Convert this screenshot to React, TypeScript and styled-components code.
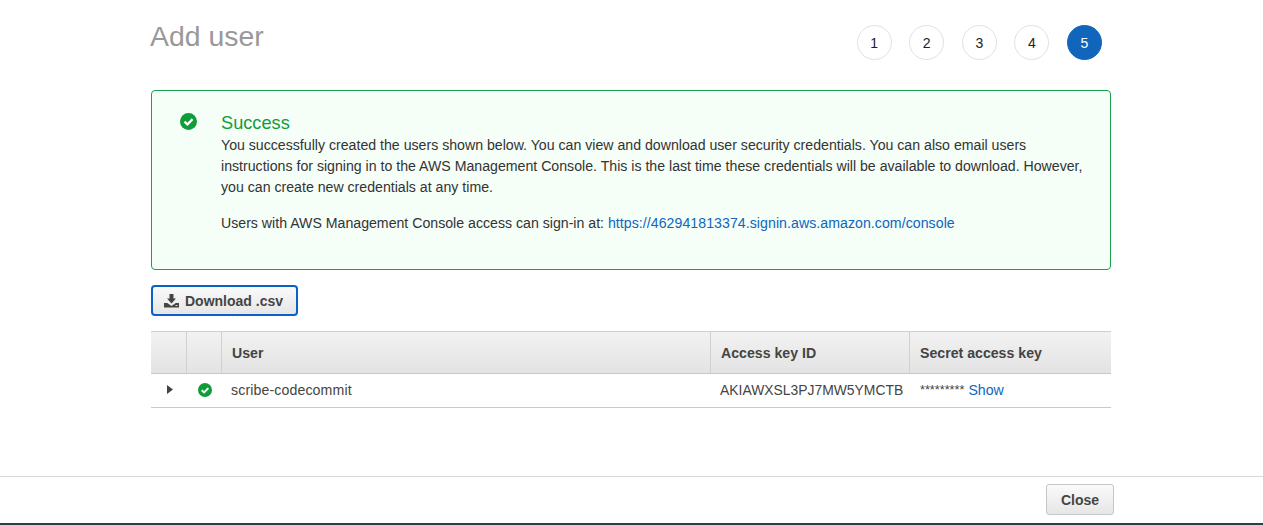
import React from 'react';
import styled, { createGlobalStyle } from 'styled-components';

const Global = createGlobalStyle`
  html, body { margin: 0; padding: 0; background: #fff; }
  body { font-family: "Liberation Sans", Arial, sans-serif; color: #333; font-size: 14.15px; }
`;
const Page = styled.div`
  width: 1263px; height: 525px; display: flex; flex-direction: column; overflow: hidden; box-sizing: border-box;
  border-bottom: 2px solid #2f3d4a;
`;
const Main = styled.main`
  flex: 1; padding: 0 152px 0 151px; display: flex; flex-direction: column;
`;
const Header = styled.header`
  height: 90px; display: flex; justify-content: space-between; align-items: flex-start;
`;
const Title = styled.h1`
  margin: 19px 0 0 -1px; font-size: 28.4px; line-height: 34px; font-weight: 400; color: #999;
`;
const Steps = styled.ol`
  list-style: none; margin: 25px 9px 0 0; padding: 0; display: flex; gap: 17.6px;
`;
const Step = styled.li<{ $active?: boolean }>`
  width: 35px; height: 35px; box-sizing: border-box; border-radius: 50%;
  display: flex; align-items: center; justify-content: center; font-size: 14px;
  background: ${p => (p.$active ? '#1166bb' : '#fff')};
  color: ${p => (p.$active ? '#fff' : '#222')};
  border: 1px solid ${p => (p.$active ? '#1166bb' : '#e1e1e1')};
`;
const Alert = styled.section`
  height: 180px; box-sizing: border-box; border: 1px solid #16a34a; border-radius: 4px; background: #f6fef8;
  display: flex; padding: 21px 24px 0 28px; gap: 24px;
`;
const AlertIcon = styled.div`
  width: 17px; height: 17px; margin-top: 1px; flex: none; color: #0f9d3a;
`;
const AlertBody = styled.div`
  flex: 1; line-height: 21px; color: #333;
`;
const AlertTitle = styled.div`
  font-size: 18.2px; line-height: 23px; color: #0f9d3a;
`;
const Para = styled.p`
  margin: 0 0 15px; line-height: 21px;
`;
const Link = styled.a`
  color: #0d66bf; text-decoration: none;
`;
const ConsoleLink = styled(Link)`
  letter-spacing: 0.05px;
`;
const DownloadButton = styled.button`
  margin-top: 15px; align-self: flex-start; width: 147px; height: 31px; box-sizing: border-box;
  border: 2px solid #0b62c4; border-radius: 4px; background: linear-gradient(#fafafa, #e6e6e6);
  font: bold 14px "Liberation Sans", Arial, sans-serif; color: #444;
  display: flex; align-items: center; justify-content: center; gap: 6px; padding: 0 2px 0 0;
`;
const Table = styled.div`
  margin-top: 15px; display: flex; flex-direction: column;
`;
const HeadRow = styled.div`
  display: grid; grid-template-columns: 35px 35px 489px 199px 202px; height: 43px; box-sizing: border-box;
  background: linear-gradient(#f2f2f2, #e3e3e3); border-top: 1px solid #d0d0d0; border-bottom: 1px solid #c9c9c9;
`;
const HeadCell = styled.div`
  display: flex; align-items: center; padding-left: 10px; font-weight: 700; color: #444; box-sizing: border-box;
  border-left: 1px solid #d0d0d0;
  &:first-child { border-left: 0; }
`;
const BodyRow = styled.div`
  display: grid; grid-template-columns: 35px 35px 489px 199px 202px; height: 34px; box-sizing: border-box;
  border-bottom: 1px solid #c9c9c9; padding-bottom: 2px;
`;
const Cell = styled.div`
  display: flex; align-items: center; padding-left: 10px; color: #444; box-sizing: border-box; white-space: nowrap;
`;
const UserCell = styled(Cell)`
  letter-spacing: 0.12px;
`;
const KeyCell = styled(Cell)`
  font-size: 13.9px;
`;
const SecretCell = styled(Cell)`
  padding-left: 11px;
`;
const IconCell = styled(Cell)`
  padding-left: 2px; justify-content: center;
`;
const Mask = styled.span`
  font-size: 12.7px; margin-right: 4px;
`;
const Footer = styled.footer`
  height: 47px; box-sizing: border-box; border-top: 1px solid #d9d9d9; display: flex; justify-content: flex-end; align-items: flex-start;
  padding: 7px 149px 0 0;
`;
const CloseButton = styled.button`
  width: 68px; height: 31px; box-sizing: border-box; border: 1px solid #c6c6c6; border-radius: 3px;
  background: linear-gradient(#fafafa, #e6e6e6); font: bold 14px "Liberation Sans", Arial, sans-serif; color: #444; padding: 0;
`;

const Check = ({ size }: { size: number }) => (
  <svg width={size} height={size} viewBox="0 0 16 16" aria-hidden>
    <circle cx="8" cy="8" r="8" fill="#0f9d3a" />
    <path d="M4.2 8.2 7 10.8 11.8 5.8" fill="none" stroke="#fff" strokeWidth="2.2" />
  </svg>
);
const DownloadIcon = () => (
  <svg width="15" height="14" viewBox="0 0 15 14" aria-hidden>
    <path d="M5.5 0h4v4.5h2.5L7.5 9.5 3 4.5h2.5z" fill="#444" />
    <path d="M0 9h3.2l4.3 3 4.3-3H15v4.5H0z" fill="#444" />
    <rect x="11.5" y="11" width="2" height="1" fill="#ddd" />
  </svg>
);
const Caret = () => (
  <svg width="6" height="9" viewBox="0 0 6 9" aria-hidden>
    <path d="M0 0l6 4.5-6 4.5z" fill="#444" />
  </svg>
);

export default function App() {
  return (
    <>
      <Global />
      <Page>
        <Main>
          <Header>
            <Title>Add user</Title>
            <Steps>
              {[1, 2, 3, 4, 5].map(n => <Step key={n} $active={n === 5}>{n}</Step>)}
            </Steps>
          </Header>
          <Alert>
            <AlertIcon><Check size={17} /></AlertIcon>
            <AlertBody>
              <AlertTitle>Success</AlertTitle>
              <Para>You successfully created the users shown below. You can view and download user security credentials. You can also email users instructions for signing in to the AWS Management Console. This is the last time these credentials will be available to download. However, you can create new credentials at any time.</Para>
              <Para>Users with AWS Management Console access can sign-in at: <ConsoleLink href="#">https://462941813374.signin.aws.amazon.com/console</ConsoleLink></Para>
            </AlertBody>
          </Alert>
          <DownloadButton><DownloadIcon />Download .csv</DownloadButton>
          <Table>
            <HeadRow>
              <HeadCell /><HeadCell /><HeadCell>User</HeadCell><HeadCell>Access key ID</HeadCell><HeadCell>Secret access key</HeadCell>
            </HeadRow>
            <BodyRow>
              <IconCell><Caret /></IconCell>
              <IconCell><Check size={14} /></IconCell>
              <UserCell>scribe-codecommit</UserCell>
              <KeyCell>AKIAWXSL3PJ7MW5YMCTB</KeyCell>
              <SecretCell><Mask>*********</Mask><Link href="#">Show</Link></SecretCell>
            </BodyRow>
          </Table>
        </Main>
        <Footer><CloseButton>Close</CloseButton></Footer>
      </Page>
    </>
  );
}
